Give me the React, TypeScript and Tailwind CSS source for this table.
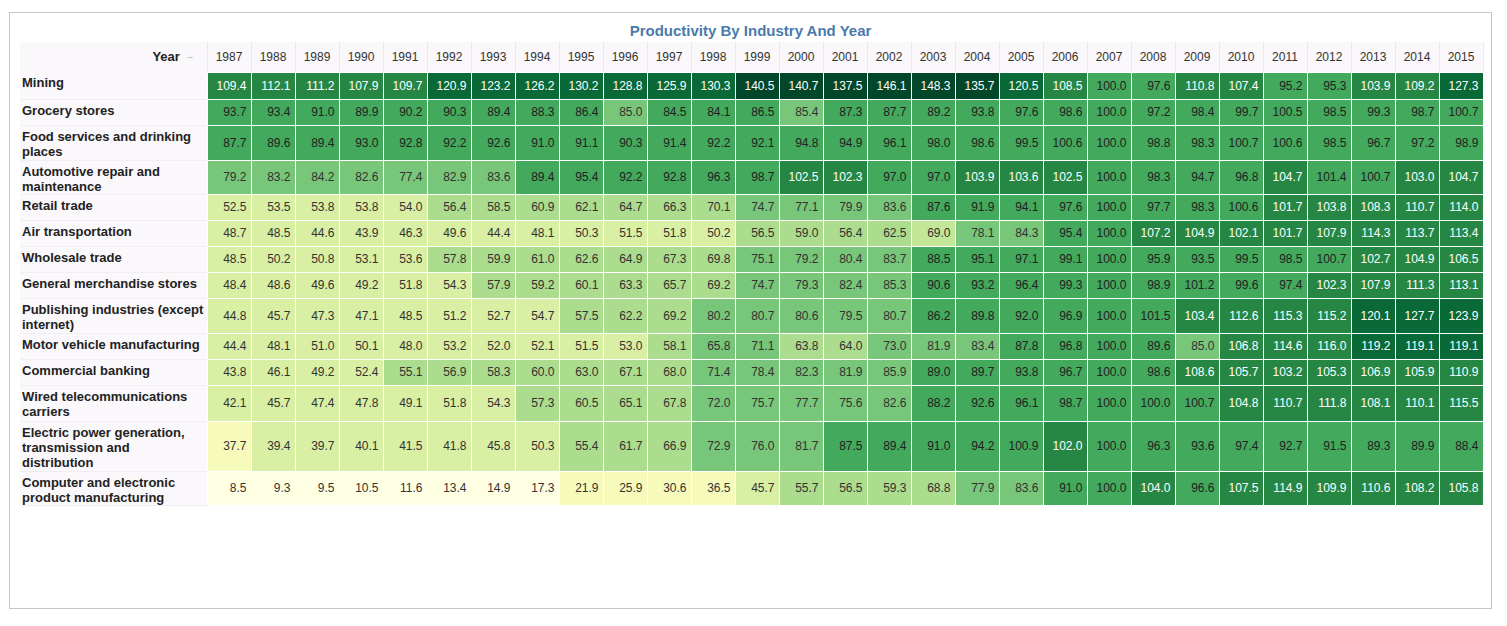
import React from 'react'

const years = Array.from({ length: 29 }, (_, i) => 1987 + i)

const rows: { name: string; h: string; v: number[] }[] = [
  { name: 'Mining', h: 'h-[27px]', v: [109.4, 112.1, 111.2, 107.9, 109.7, 120.9, 123.2, 126.2, 130.2, 128.8, 125.9, 130.3, 140.5, 140.7, 137.5, 146.1, 148.3, 135.7, 120.5, 108.5, 100.0, 97.6, 110.8, 107.4, 95.2, 95.3, 103.9, 109.2, 127.3] },
  { name: 'Grocery stores', h: 'h-[26px]', v: [93.7, 93.4, 91.0, 89.9, 90.2, 90.3, 89.4, 88.3, 86.4, 85.0, 84.5, 84.1, 86.5, 85.4, 87.3, 87.7, 89.2, 93.8, 97.6, 98.6, 100.0, 97.2, 98.4, 99.7, 100.5, 98.5, 99.3, 98.7, 100.7] },
  { name: 'Food services and drinking places', h: 'h-[35px]', v: [87.7, 89.6, 89.4, 93.0, 92.8, 92.2, 92.6, 91.0, 91.1, 90.3, 91.4, 92.2, 92.1, 94.8, 94.9, 96.1, 98.0, 98.6, 99.5, 100.6, 100.0, 98.8, 98.3, 100.7, 100.6, 98.5, 96.7, 97.2, 98.9] },
  { name: 'Automotive repair and maintenance', h: 'h-[34px]', v: [79.2, 83.2, 84.2, 82.6, 77.4, 82.9, 83.6, 89.4, 95.4, 92.2, 92.8, 96.3, 98.7, 102.5, 102.3, 97.0, 97.0, 103.9, 103.6, 102.5, 100.0, 98.3, 94.7, 96.8, 104.7, 101.4, 100.7, 103.0, 104.7] },
  { name: 'Retail trade', h: 'h-[26px]', v: [52.5, 53.5, 53.8, 53.8, 54.0, 56.4, 58.5, 60.9, 62.1, 64.7, 66.3, 70.1, 74.7, 77.1, 79.9, 83.6, 87.6, 91.9, 94.1, 97.6, 100.0, 97.7, 98.3, 100.6, 101.7, 103.8, 108.3, 110.7, 114.0] },
  { name: 'Air transportation', h: 'h-[26px]', v: [48.7, 48.5, 44.6, 43.9, 46.3, 49.6, 44.4, 48.1, 50.3, 51.5, 51.8, 50.2, 56.5, 59.0, 56.4, 62.5, 69.0, 78.1, 84.3, 95.4, 100.0, 107.2, 104.9, 102.1, 101.7, 107.9, 114.3, 113.7, 113.4] },
  { name: 'Wholesale trade', h: 'h-[26px]', v: [48.5, 50.2, 50.8, 53.1, 53.6, 57.8, 59.9, 61.0, 62.6, 64.9, 67.3, 69.8, 75.1, 79.2, 80.4, 83.7, 88.5, 95.1, 97.1, 99.1, 100.0, 95.9, 93.5, 99.5, 98.5, 100.7, 102.7, 104.9, 106.5] },
  { name: 'General merchandise stores', h: 'h-[26px]', v: [48.4, 48.6, 49.6, 49.2, 51.8, 54.3, 57.9, 59.2, 60.1, 63.3, 65.7, 69.2, 74.7, 79.3, 82.4, 85.3, 90.6, 93.2, 96.4, 99.3, 100.0, 98.9, 101.2, 99.6, 97.4, 102.3, 107.9, 111.3, 113.1] },
  { name: 'Publishing industries (except internet)', h: 'h-[35px]', v: [44.8, 45.7, 47.3, 47.1, 48.5, 51.2, 52.7, 54.7, 57.5, 62.2, 69.2, 80.2, 80.7, 80.6, 79.5, 80.7, 86.2, 89.8, 92.0, 96.9, 100.0, 101.5, 103.4, 112.6, 115.3, 115.2, 120.1, 127.7, 123.9] },
  { name: 'Motor vehicle manufacturing', h: 'h-[26px]', v: [44.4, 48.1, 51.0, 50.1, 48.0, 53.2, 52.0, 52.1, 51.5, 53.0, 58.1, 65.8, 71.1, 63.8, 64.0, 73.0, 81.9, 83.4, 87.8, 96.8, 100.0, 89.6, 85.0, 106.8, 114.6, 116.0, 119.2, 119.1, 119.1] },
  { name: 'Commercial banking', h: 'h-[26px]', v: [43.8, 46.1, 49.2, 52.4, 55.1, 56.9, 58.3, 60.0, 63.0, 67.1, 68.0, 71.4, 78.4, 82.3, 81.9, 85.9, 89.0, 89.7, 93.8, 96.7, 100.0, 98.6, 108.6, 105.7, 103.2, 105.3, 106.9, 105.9, 110.9] },
  { name: 'Wired telecommunications carriers', h: 'h-[36px]', v: [42.1, 45.7, 47.4, 47.8, 49.1, 51.8, 54.3, 57.3, 60.5, 65.1, 67.8, 72.0, 75.7, 77.7, 75.6, 82.6, 88.2, 92.6, 96.1, 98.7, 100.0, 100.0, 100.7, 104.8, 110.7, 111.8, 108.1, 110.1, 115.5] },
  { name: 'Electric power generation, transmission and distribution', h: 'h-[50px]', v: [37.7, 39.4, 39.7, 40.1, 41.5, 41.8, 45.8, 50.3, 55.4, 61.7, 66.9, 72.9, 76.0, 81.7, 87.5, 89.4, 91.0, 94.2, 100.9, 102.0, 100.0, 96.3, 93.6, 97.4, 92.7, 91.5, 89.3, 89.9, 88.4] },
  { name: 'Computer and electronic product manufacturing', h: 'h-[34px]', v: [8.5, 9.3, 9.5, 10.5, 11.6, 13.4, 14.9, 17.3, 21.9, 25.9, 30.6, 36.5, 45.7, 55.7, 56.5, 59.3, 68.8, 77.9, 83.6, 91.0, 100.0, 104.0, 96.6, 107.5, 114.9, 109.9, 110.6, 108.2, 105.8] },
]

// YlGn steps, light to dark (last one sits between 2 and 3)
const shades = [
  'bg-[#ffffe3] text-[#333]',
  'bg-[#f6fabb] text-[#333]',
  'bg-[#d9efa3] text-[#333]',
  'bg-[#acdc8d] text-[#333]',
  'bg-[#78c679] text-[#333]',
  'bg-[#43a95c] text-[#222]',
  'bg-[#268745] text-white',
  'bg-[#096a38] text-white',
  'bg-[#03472a] text-white',
  'bg-[#c3e698] text-[#333]',
]

// cells the chart shades off the plain value steps
const overrides: Record<string, number> = {
  '1-10': 5,
  '1-11': 5,
  '5-16': 9,
  '9-11': 4,
}

function step(v: number) {
  if (v < 20) return 0
  if (v < 38.5) return 1
  if (v < 55) return 2
  if (v < 71) return 3
  if (v < 86) return 4
  if (v < 101.6) return 5
  if (v < 118) return 6
  if (v < 135) return 7
  return 8
}

export default function App() {
  return (
    <div className="min-h-screen bg-white pl-[9px] pt-[12px] font-['Liberation_Sans',Arial,sans-serif]">
      <div className="w-[1483px] h-[597px] border border-[#c6c6c6] bg-white">
        <div className="pt-[10px] mb-[3px] text-center text-[15px] leading-[16px] font-bold text-[#4a7aab]">
          Productivity By Industry And Year
        </div>
        <table className="ml-[10px] table-fixed border-collapse">
          <colgroup>
            <col className="w-[187px]" />
            {years.map((y) => (
              <col key={y} className="w-[44px]" />
            ))}
          </colgroup>
          <thead>
            <tr className="h-[30px] bg-[#faf8fb]">
              <th className="border-r border-[#ece8ef] pr-[12px] text-right text-[13px] font-bold text-[#222]">
                Year <span className="ml-[2px] align-[2px] text-[9px] font-normal text-[#9aa]">→</span>
              </th>
              {years.map((y) => (
                <th key={y} className="border-r border-[#ece8ef] text-center text-[12px] font-normal text-[#333]">
                  {y}
                </th>
              ))}
            </tr>
          </thead>
          <tbody>
            {rows.map((r, ri) => (
              <tr key={r.name} className={r.h}>
                <td className="border-b border-[#f1eef3] bg-[#faf8fb] px-[2px] pt-[3px] align-top text-[13px] leading-[15px] font-bold text-[#222]">
                  {r.name}
                </td>
                {r.v.map((v, ci) => {
                  const s = overrides[`${ri}-${ci}`] ?? step(v)
                  return (
                    <td key={ci} className={`border border-white pr-[4px] text-right text-[12px] ${shades[s]}`}>
                      {v.toFixed(1)}
                    </td>
                  )
                })}
              </tr>
            ))}
          </tbody>
        </table>
      </div>
    </div>
  )
}
